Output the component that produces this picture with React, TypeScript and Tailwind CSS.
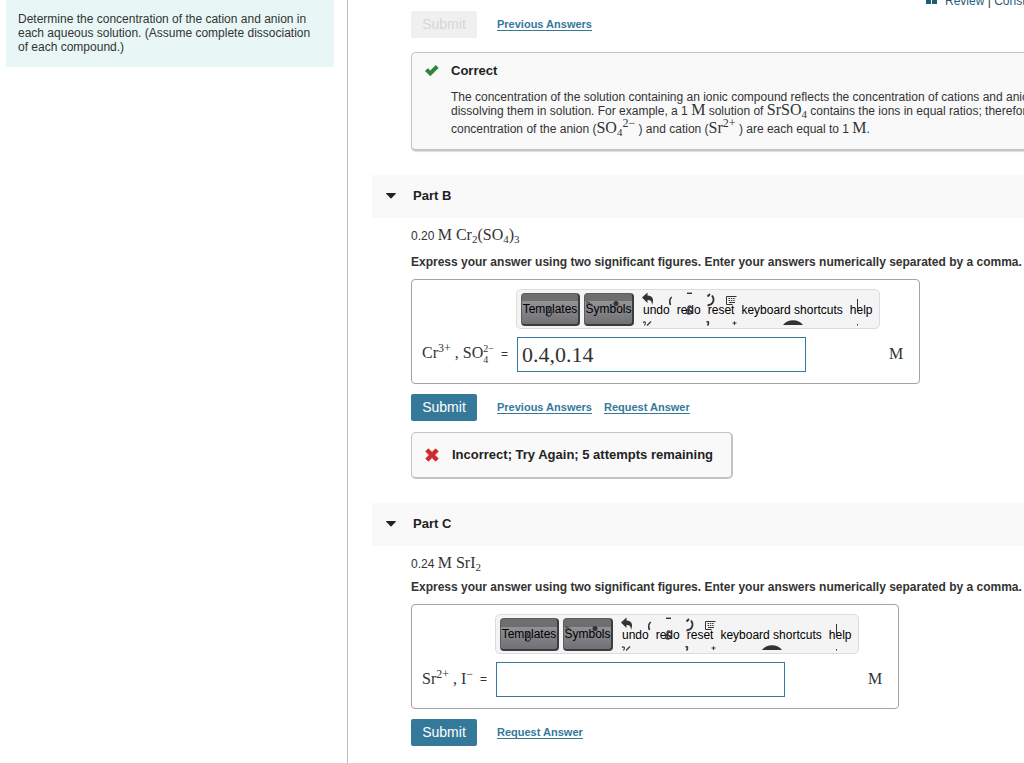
import { ReactNode } from "react";

// Serif run used for units and chemical formulas.
// Zero line height keeps it from pushing the surrounding lines apart.
function Chem({ children }: { children: ReactNode }) {
  return (
    <span className="font-['Liberation_Serif',serif] text-[16px] leading-[0px]">{children}</span>
  );
}

function Sub({ children }: { children: ReactNode }) {
  return <sub className="bottom-[-3px] text-[11px] leading-[0px]">{children}</sub>;
}

function Sup({ children }: { children: ReactNode }) {
  return <sup className="top-[-6px] text-[12px] leading-[0px]">{children}</sup>;
}

// Superscript stacked on top of a subscript
function Stack({ top, bottom }: { top: string; bottom: string }) {
  return (
    <span className="inline-flex flex-col align-middle text-[10px] leading-[11px]">
      <span>{top}</span>
      <span>{bottom}</span>
    </span>
  );
}

function CheckIcon() {
  return (
    <svg width="14" height="12" viewBox="0 0 14 12" aria-hidden="true">
      <path d="M0.3 6 2.9 3.4 5.3 5.7 10.8 0.3 13.4 2.9 5.3 11Z" fill="#2f8540" stroke="#2f8540" strokeWidth="0.5" strokeLinejoin="round" />
    </svg>
  );
}

function CrossIcon() {
  return (
    <svg width="14" height="14" viewBox="0 0 14 14" aria-hidden="true">
      <path
        d="M3.4 0.8 7 4.4 10.6 0.8 13.2 3.4 9.6 7 13.2 10.6 10.6 13.2 7 9.6 3.4 13.2 0.8 10.6 4.4 7 0.8 3.4Z"
        fill="#d0282e"
        stroke="#d0282e"
        strokeWidth="0.9"
        strokeLinejoin="round"
      />
    </svg>
  );
}

// Bits of the toolbar glyphs that show around the button labels
function ToolbarMarks() {
  return (
    <svg
      className="pointer-events-none absolute -top-px -left-px"
      width="364"
      height="40"
      viewBox="0 0 364 40"
      fill="none"
      stroke="#333"
      aria-hidden="true"
    >
      <path d="M36 19c-3-1.500-5 1-3 2.500s4 2 2 4.500-4 1-3.500-1" strokeWidth="1.2" />
      <path d="M70 12.500l4 1.500M70 15h5.500" strokeWidth="0.9" />
      <circle cx="100" cy="14.5" r="2.500" fill="#333" stroke="none" />
      <path d="M126 8.500 131.500 3.500v3c5 0 7 4 4.500 9.500 0-4-1.500-5-4.500-5v3Z" fill="#333" stroke="none" />
      <path d="M155.800 8c-2.500 2-2.500 5-1.300 8" strokeWidth="1.6" />
      <path d="M171 4.300h5" strokeWidth="1.4" />
      <path d="M127 33.500c2-1.500 3.500 0 1.500 3M135 32.500l-4 4" strokeWidth="1.1" />
      <path d="M175.500 18.500c-1-3-5-1-3 1.500l4 4.500M173 20.500c-3 .5-3 4.500 0 4.500 2 0 3-2 3-4" strokeWidth="1.3" />
      <path d="M191.500 7.500 194 5M196 6.500c3 4 1.500 9-4.500 10" strokeWidth="1.8" />
      <path d="M190.500 33c2.500-1 2.500 1.500 1 3.500" strokeWidth="1.6" />
      <path d="M220.500 7.500h-10v8h6" strokeWidth="1" />
      <path d="M212.500 9.500h7M212.500 11.500h7" strokeDasharray="1.5 0.8" strokeWidth="1" />
      <path d="M213 13.500h6" strokeWidth="1" />
      <path d="M216.500 34h4M218.500 32.500v3.500" strokeWidth="1.1" />
      <path d="M267 36c4-6.500 16-6.500 20 0Z" fill="#333" stroke="none" />
      <path d="M341.500 10v11M341.500 35v1.500" strokeWidth="1" />
    </svg>
  );
}

function Toolbar() {
  const dark =
    "h-[33px] shrink-0 rounded-[4px] border border-[#5c5c5c] border-r-2 border-b-2 border-r-[#3c3c3c] border-b-[#3c3c3c] bg-linear-to-b from-[#6e6e6e] from-25% via-[#929297] via-25% to-[#717175] text-center";
  return (
    <div
      role="toolbar"
      className="relative flex h-10 w-[364px] items-center rounded-[5px] border border-[#dcdcdc] bg-[#f4f4f4] pl-1 text-[12px] text-black"
    >
      <button className={`${dark} w-[59px]`}>Templates</button>
      <button className={`${dark} ml-1 w-[50px]`}>Symbols</button>
      <div className="ml-[9px] flex gap-[7px] pt-px">
        <button>undo</button>
        <button>redo</button>
        <button>reset</button>
        <button>keyboard shortcuts</button>
        <button>help</button>
      </div>
      <ToolbarMarks />
    </div>
  );
}

function AnswerBox({
  id,
  label,
  value,
  labelWidth,
}: {
  id: string;
  label: ReactNode;
  value?: string;
  labelWidth: string;
}) {
  return (
    <div className="flex w-fit items-end rounded-[4px] border border-[#a3a3a3] pt-[9px] pr-4 pb-[11px] pl-[10px]">
      <label htmlFor={id} className={`flex h-9 items-center justify-between pr-2 text-[12px] ${labelWidth}`}>
        <Chem>{label}</Chem>
        <span>=</span>
      </label>
      <div className="flex flex-col gap-2">
        <Toolbar />
        <input
          id={id}
          defaultValue={value}
          className="ml-px h-[35px] w-[289px] border border-[#35799a] bg-white px-1 font-['Liberation_Serif',serif] text-[22px] text-[#333] outline-none"
        />
      </div>
      <div className="flex h-9 items-center pl-[9px]">
        <Chem>M</Chem>
      </div>
    </div>
  );
}

function PartHeader({ children }: { children: ReactNode }) {
  return (
    <div className="flex h-[43px] items-center bg-[#f9f9f9] pb-[2px] pl-[14px]">
      <svg width="10" height="6" viewBox="0 0 10 6" aria-hidden="true">
        <path d="M0.5 0h9a.5.5 0 0 1 .3.8L5.500 5.200a.8.8 0 0 1-1 0L.2.8A.5.5 0 0 1 .5 0Z" fill="#222" />
      </svg>
      <h2 className="ml-[17px] text-[13px] leading-4 font-bold text-[#222]">{children}</h2>
    </div>
  );
}

function Submit({ disabled = false }: { disabled?: boolean }) {
  return (
    <button
      disabled={disabled}
      className="h-[27px] w-[66px] rounded-[2px] bg-[#35799a] pb-[2px] text-[14px] text-white disabled:bg-[#f0f0f0] disabled:text-[#d6d6d6]"
    >
      Submit
    </button>
  );
}

function AnswerLink({ children }: { children: ReactNode }) {
  return (
    <a href="#" className="border-b border-[#35799a] text-[11px] leading-[12px] font-bold text-[#35799a]">
      {children}
    </a>
  );
}

const instructions =
  "Express your answer using two significant figures. Enter your answers numerically separated by a comma.";

export default function App() {
  return (
    <div className="flex h-screen overflow-hidden bg-white font-['Liberation_Sans',Arial,sans-serif] text-[12px] leading-[14px] text-[#333]">
      <aside className="w-[348px] shrink-0 border-r border-[#b9bec8] pr-[13px] pl-[6px]">
        <div className="bg-[#e8f6f6] pt-3 pr-3 pb-[13px] pl-3">
          Determine the concentration of the cation and anion in each aqueous solution. (Assume complete
          dissociation of each compound.)
        </div>
      </aside>

      <main className="min-w-0 flex-1 overflow-hidden pl-6 whitespace-nowrap">
        <div className="flex h-[11px] items-end gap-2 pb-[3px] pl-[554px] text-[#1f5c78]">
          <svg width="11" height="11" viewBox="0 0 11 11" className="shrink-0" aria-hidden="true">
            <path d="M0 0h5v7H0ZM6 0h5v7H6Z" fill="#1f5c78" />
          </svg>
          <div>
            <a href="#">Review</a> <span className="text-[#333]">|</span> <a href="#">Constants</a>
          </div>
        </div>

        {/* Part A */}
        <div className="flex items-center gap-5 pl-[39px]">
          <Submit disabled />
          <AnswerLink>Previous Answers</AnswerLink>
        </div>
        <section className="mt-[14px] ml-[39px] flex h-[99px] gap-3 rounded-l-[5px] border-y border-l border-[#c4c4c4] border-b-2 bg-[#f9f9f9] pt-[10px] pl-[13px] shadow-[0_1px_1px_#ddd]">
          <div className="pt-[2px]">
            <CheckIcon />
          </div>
          <div>
            <h3 className="text-[13px] leading-4 font-bold text-[#222]">Correct</h3>
            <p className="mt-[11px]">
              The concentration of the solution containing an ionic compound reflects the concentration of
              cations and anions after
            </p>
            <p>
              dissolving them in solution. For example, a 1 <Chem>M</Chem> solution of{" "}
              <Chem>
                SrSO<Sub>4</Sub>
              </Chem>{" "}
              contains the ions in equal ratios; therefore, the
            </p>
            <p className="mt-1">
              concentration of the anion (
              <Chem>
                SO<Sub>4</Sub>
                <Sup>2−</Sup>
              </Chem>{" "}
              ) and cation (
              <Chem>
                Sr<Sup>2+</Sup>
              </Chem>{" "}
              ) are each equal to 1 <Chem>M</Chem>.
            </p>
          </div>
        </section>

        {/* Part B */}
        <section className="mt-6">
          <PartHeader>Part B</PartHeader>
          <div className="pl-[39px]">
            <p className="mt-[6px] h-6 leading-6">
              0.20{" "}
              <Chem>
                M Cr<Sub>2</Sub>(SO<Sub>4</Sub>)<Sub>3</Sub>
              </Chem>
            </p>
            <p className="mt-[7px] mb-[10px] font-bold">{instructions}</p>
            <AnswerBox
              id="part-b"
              labelWidth="w-[94px]"
              value="0.4,0.14"
              label={
                <>
                  Cr<Sup>3+</Sup> , SO
                  <Stack top="2−" bottom="4" />
                </>
              }
            />
            <div className="mt-[10px] flex items-center gap-5">
              <Submit />
              <div className="flex gap-3">
                <AnswerLink>Previous Answers</AnswerLink>
                <AnswerLink>Request Answer</AnswerLink>
              </div>
            </div>
            <div className="mt-[11px] flex h-[47px] w-fit items-center gap-[13px] rounded-[5px] border border-r-2 border-b-2 border-[#c4c4c4] bg-[#f9f9f9] pr-[18px] pl-[13px] text-[13px] font-bold text-[#222]">
              <CrossIcon />
              Incorrect; Try Again; 5 attempts remaining
            </div>
          </div>
        </section>

        {/* Part C */}
        <section className="mt-6">
          <PartHeader>Part C</PartHeader>
          <div className="pl-[39px]">
            <p className="mt-[6px] h-6 leading-6">
              0.24{" "}
              <Chem>
                M SrI<Sub>2</Sub>
              </Chem>
            </p>
            <p className="mt-1 mb-[10px] font-bold">{instructions}</p>
            <AnswerBox
              id="part-c"
              labelWidth="w-[73px]"
              label={
                <>
                  Sr<Sup>2+</Sup> , I<Sup>−</Sup>
                </>
              }
            />
            <div className="mt-[10px] flex items-center gap-5">
              <Submit />
              <AnswerLink>Request Answer</AnswerLink>
            </div>
          </div>
        </section>
      </main>
    </div>
  );
}
